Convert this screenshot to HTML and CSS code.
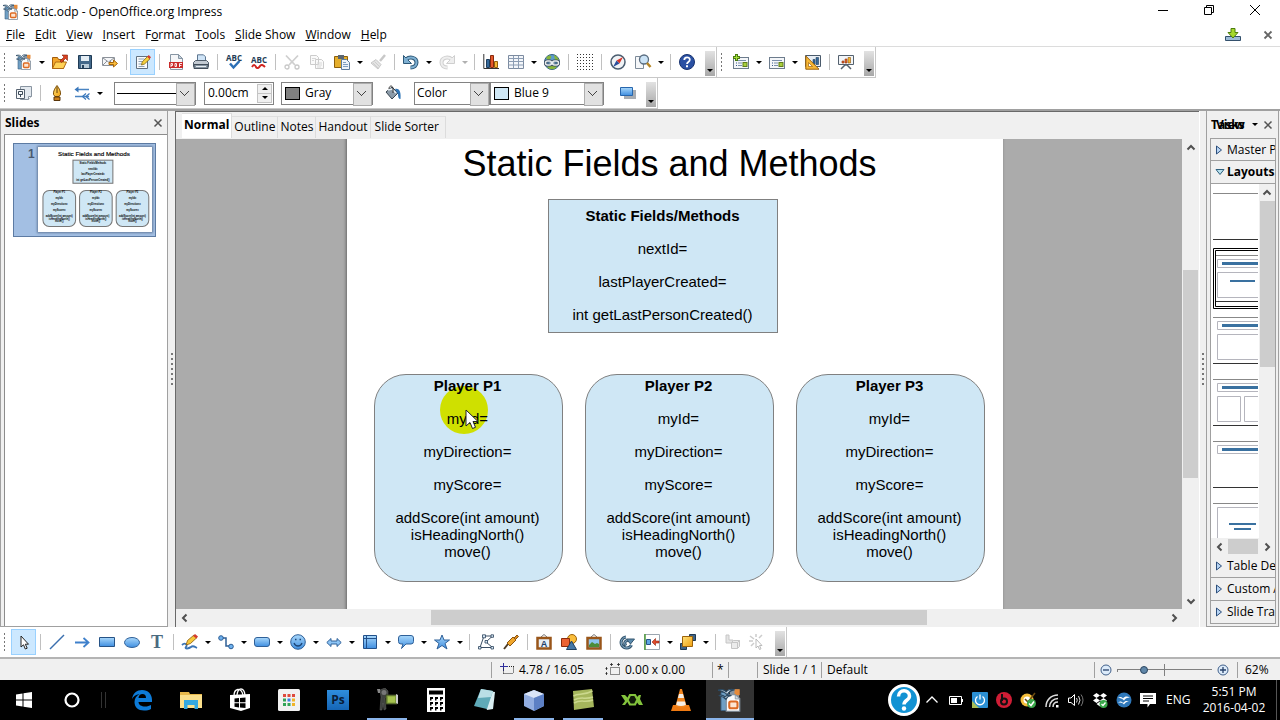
FILE: index.html
```html
<!DOCTYPE html>
<html lang="en">
<head>
  <meta charset="UTF-8">
  <meta name="viewport" content="width=device-width, initial-scale=1.0">
  <title>Static.odp - OpenOffice.org Impress</title>
  <link rel="stylesheet" href="styles.css">
</head>
<body>
  <!-- shared gradients and symbols -->
  <svg class="defs" aria-hidden="true">
    <defs>
      <linearGradient id="blue" x1="0" y1="0" x2="0" y2="1"><stop offset="0" stop-color="#a9d8fb"/><stop offset="1" stop-color="#3f8ee0"/></linearGradient>
      <linearGradient id="gold" x1="0" y1="0" x2="1" y2="1"><stop offset="0" stop-color="#ffe27a"/><stop offset="1" stop-color="#f0a010"/></linearGradient>
      <symbol id="impress" viewBox="0 0 16 16">
        <path d="M2 3h5v12H2z" fill="#6f9fc4" stroke="#3c6283" stroke-width=".6"/>
        <path d="M8 1h6v6H8z" fill="#8795a2"/><path d="M11 .8h3.500v4H11z" fill="#e58a3a"/>
        <path d="M5.500 4.500h6l3 2.500v8.500h-9z" fill="#fafbfc" stroke="#7f8c99" stroke-width=".8"/>
        <path d="M11.500 4.500v2.800h3z" fill="#d5dde4" stroke="#7f8c99" stroke-width=".5"/>
        <path d="M0 1.500c3-1 4.500 0 5.500 1C7 .5 8.500.5 11 1.200 8.500 1.500 7 2.500 6.200 4.500 4.500 2.500 2.500 2 0 1.500zM.5 5c2.500-.6 3.500.2 4.200 1C5.800 4.500 7 4.500 9 5c-1.800.2-3 1-3.700 2.500C4 6 2.500 5.500.500 5z" fill="#dfe9f1" stroke="#2b4a64" stroke-width=".8"/>
        <rect x="7.500" y="9" width="5.500" height="4.500" rx="1" fill="#fde5d2" stroke="#dd6a23" stroke-width="1.400"/>
      </symbol>
      <symbol id="pages" viewBox="0 0 16 12">
        <rect x=".5" y=".5" width="15" height="11" fill="#f4f6f9" stroke="#6d7c8d"/>
        <path d="M3 3.500h10M5 6h4M5 8.500h4" stroke="#7b8fab"/><path d="M3 6h1M3 8.500h1" stroke="#36598c"/>
        <rect x="10" y="5.500" width="4" height="4" fill="#a9cf3b" stroke="#5f7d1c"/>
      </symbol>
      <symbol id="chev" viewBox="0 0 10 10"><path d="M1.500 6.500L5 3l3.500 3.500" fill="none" stroke="#505050" stroke-width="2"/></symbol>
      <symbol id="tri" viewBox="0 0 8 10"><path d="M1.500 1v8l5-4z" fill="#b7d4f4" stroke="#2d4f7c"/></symbol>
    </defs>
  </svg>

  <header class="titlebar">
    <svg class="icon" viewBox="0 0 16 16"><use href="#impress"/></svg>
    <h1>Static.odp - OpenOffice.org Impress</h1>
    <div class="window-buttons">
      <button aria-label="Minimize"><svg class="icon" viewBox="0 0 16 16"><path d="M3 8.500h10" stroke="#000"/></svg></button>
      <button aria-label="Restore"><svg class="icon" viewBox="0 0 16 16"><path d="M3.500 5.500h7v7h-7zM5.500 5.500v-2h7v7h-2" fill="none" stroke="#000"/></svg></button>
      <button aria-label="Close"><svg class="icon" viewBox="0 0 16 16"><path d="M3 3l10 10M13 3L3 13" stroke="#000"/></svg></button>
    </div>
  </header>

  <nav class="menubar">
    <button><u>F</u>ile</button>
    <button><u>E</u>dit</button>
    <button><u>V</u>iew</button>
    <button><u>I</u>nsert</button>
    <button>F<u>o</u>rmat</button>
    <button><u>T</u>ools</button>
    <button><u>S</u>lide Show</button>
    <button><u>W</u>indow</button>
    <button><u>H</u>elp</button>
    <div class="menubar-right">
      <button aria-label="Update available"><svg class="icon" viewBox="0 0 16 16"><path d="M.5 9.500h15v4H.5z" fill="#9dbbd6" stroke="#33506c"/><path d="M6 1.500h4v4h3L8 11 3 5.500h3z" fill="#a6d82c" stroke="#4c7d0d"/></svg></button>
      <button aria-label="Close document"><svg class="icon" viewBox="0 0 16 16"><path d="M4.500 4.500l7 7M11.500 4.500l-7 7" stroke="#666" stroke-width="1.800"/></svg></button>
    </div>
  </nav>

  <div class="toolbars">
    <div class="toolbar">
      <span class="grip"></span>
      <button class="tool" aria-label="New"><svg class="icon" viewBox="0 0 16 16"><use href="#impress"/></svg></button>
      <button class="arrow" aria-label="New options"></button>
      <button class="tool" aria-label="Open"><svg class="icon" viewBox="0 0 16 16"><path d="M.5 14.500v-11h5l1 2h5v9z" fill="#f3a62a" stroke="#a35c0c"/><path d="M.5 14.500l3-6.500h11l-3 6.500z" fill="#ffd257" stroke="#b06a12"/><path d="M8 7l4-4-2-2h5.500v5.500L13.500 4.500l-4 4z" fill="#d8401f" stroke="#84220e" stroke-width=".6"/></svg></button>
      <button class="tool" aria-label="Save"><svg class="icon" viewBox="0 0 16 16"><path d="M1.500 1.500h13v13h-13z" fill="#42688a" stroke="#1f3a54"/><path d="M4 2h8v5H4z" fill="#e4edf4"/><path d="M4 10h8v4H4z" fill="#b8cbd9"/><path d="M5 11h2v3H5z" fill="#24425e"/></svg></button>
      <button class="tool" aria-label="E-mail document"><svg class="icon" viewBox="0 0 16 16"><path d="M.5 3.500h12v8H.5z" fill="#f5f6f8" stroke="#8c929a"/><path d="M1 4l5.500 4L12 4M1 11l4-4M12 11L8 7" fill="none" stroke="#8c929a"/><path d="M7 8.500h4.500v-2.500l4 3.500-4 3.500v-2.500H7z" fill="#f9bd3a" stroke="#a8650b"/></svg></button>
      <span class="sep"></span>
      <button class="tool active" aria-label="Edit file"><svg class="icon" viewBox="0 0 16 16"><path d="M1.500 2.500h11v12h-11z" fill="#fafbfc" stroke="#61707f"/><path d="M3.500 5h6M3.500 7.500h4M3.500 10h3M3.500 12.500h6" stroke="#8ca1b4"/><path d="M6.500 11l.7-3L12.500 2.500l2.500 2.300L9.500 10z" fill="#f7d23e" stroke="#7f6310" stroke-width=".8"/><path d="M12.200 2.800l1.500-1.800L16 3.200l-1.500 1.800z" fill="#d43b2f"/></svg></button>
      <span class="sep"></span>
      <button class="tool" aria-label="Export as PDF"><svg class="icon" viewBox="0 0 16 16"><path d="M2.500.5h8l4 4v11h-12z" fill="#f5f6f8" stroke="#8795a3"/><path d="M10.500.5v4h4z" fill="#c6d4df" stroke="#8795a3"/><path d="M1 8h14v6H1z" fill="#c92a2a"/><path d="M3 13V9.500h1.500v2H3M7 9.500v3h1.500v-3zM11.500 13V9.500H14M11.500 11.500h2" fill="none" stroke="#fff" stroke-width=".9"/></svg></button>
      <button class="tool" aria-label="Print"><svg class="icon" viewBox="0 0 16 16"><path d="M4.500 8V.8h6l2 2V8" fill="#cfe4f7" stroke="#5d7690"/><path d="M.5 8.500l2-2h11l2 2v4H.5z" fill="#c3cad2" stroke="#515d6a"/><path d="M1 10.500h14v4H1z" fill="#8896a3" stroke="#414c58"/><path d="M3 12.500h10" stroke="#e9eef2"/></svg></button>
      <span class="sep"></span>
      <button class="tool" aria-label="Spellcheck"><svg class="icon wide" viewBox="0 0 18 16"><text x="9" y="7" class="abc">ABC</text><path d="M5 9.500l3.500 4 6-6.500" fill="none" stroke="#2c6fb6" stroke-width="2.500"/></svg></button>
      <button class="tool" aria-label="AutoSpellcheck"><svg class="icon wide" viewBox="0 0 18 16"><text x="9" y="9" class="abc">ABC</text><path d="M2 13c2-3 3-2 4 0s3 1 4-1 3-1 5 1" fill="none" stroke="#d0241f" stroke-width="2"/></svg></button>
      <span class="sep"></span>
      <button class="tool" disabled aria-label="Cut"><svg class="icon" viewBox="0 0 16 16"><path d="M2 1.500l9 9.500M14 1.500L5 11" stroke="#cfcfcf" stroke-width="1.800"/><circle cx="3" cy="13" r="2" fill="none" stroke="#c8c8c8" stroke-width="1.300"/><circle cx="13" cy="13" r="2" fill="none" stroke="#c8c8c8" stroke-width="1.300"/></svg></button>
      <button class="tool" disabled aria-label="Copy"><svg class="icon" viewBox="0 0 16 16"><path d="M1.500 1.500h6l2 2v7h-8zM6.500 5.500h6l2 2v7h-8z" fill="#fafafa" stroke="#cccccc"/><path d="M3 4.500h4M3 6.500h2M8 9h5M8 11h5M8 13h4" stroke="#d8d8d8"/></svg></button>
      <button class="tool" aria-label="Paste"><svg class="icon" viewBox="0 0 16 16"><path d="M.5 2.500h13v11H.5z" fill="#e5ae2c" stroke="#8c5f0c"/><path d="M4 1h6v4H4z" fill="#5a6570"/><path d="M7.500 5.500h5l3 3v7h-8z" fill="#edf4fb" stroke="#5c7d9e"/><path d="M9 8.500h3M9 10.500h5M9 12.500h5" stroke="#7f9fc0"/></svg></button>
      <button class="arrow" aria-label="Paste options"></button>
      <button class="tool" disabled aria-label="Format paintbrush"><svg class="icon" viewBox="0 0 16 16"><path d="M15 1l-5 6" stroke="#c8c8c8" stroke-width="2.500"/><path d="M6 5.500l5 5-3 4.500-7-6z" fill="#e4e4e4" stroke="#c8c8c8"/><path d="M3 9l5 5M4.500 7.500l5 5" stroke="#cecece"/></svg></button>
      <span class="sep"></span>
      <button class="tool" aria-label="Undo"><svg class="icon" viewBox="0 0 16 16"><path d="M3 5.500c4-3.500 10.500-2 10.500 3 0 3-2.500 5-6 5" fill="none" stroke="#2d5878" stroke-width="4"/><path d="M.5 1.500v8h8z" fill="#7fb0d2" stroke="#2d5878"/><path d="M3 5.500c4-3.500 10.500-2 10.500 3 0 3-2.500 5-6 5" fill="none" stroke="#7fb0d2" stroke-width="2"/></svg></button>
      <button class="arrow" aria-label="Undo history"></button>
      <button class="tool" disabled aria-label="Redo"><svg class="icon" viewBox="0 0 16 16"><path d="M13 5.500c-4-3.500-10.500-2-10.500 3 0 3 2.500 5 6 5" fill="none" stroke="#cfcfcf" stroke-width="4"/><path d="M15.500 1.500v8h-8z" fill="#eee" stroke="#cfcfcf"/><path d="M13 5.500c-4-3.500-10.500-2-10.500 3 0 3 2.500 5 6 5" fill="none" stroke="#eee" stroke-width="2"/></svg></button>
      <button class="arrow" disabled aria-label="Redo history"></button>
      <span class="sep"></span>
      <button class="tool" aria-label="Chart"><svg class="icon" viewBox="0 0 16 16"><path d="M.8 0v14.500H16" fill="none" stroke="#333"/><path d="M3.500 5.500h3v8h-3z" fill="#35699b" stroke="#1e3d5c"/><path d="M7.500 1.500h3v12h-3z" fill="#e4572a" stroke="#872a0e"/><path d="M11.500 7.500h3v6h-3z" fill="#f6b834" stroke="#93600c"/></svg></button>
      <button class="tool" aria-label="Table"><svg class="icon" viewBox="0 0 16 16"><path d="M.5 1.500h15v13H.5z" fill="#f3f6fa" stroke="#7c8ba0"/><path d="M.5 4.500h15M.5 7.500h15M.5 11h15M5.500 2v12.500M10.500 2v12.500" stroke="#8b9cb3"/></svg></button>
      <button class="arrow" aria-label="Table options"></button>
      <button class="tool" aria-label="Hyperlink"><svg class="icon" viewBox="0 0 16 16"><circle cx="8" cy="8" r="7.500" fill="#5b9bcb" stroke="#335f85"/><path d="M2 4c2-3 4-3 5-2s-1 4-3 4zM10 1c3 1 5 4 5 6l-4-1zM3 13c3-2 8-2 10 0-3 3-7 3-10 0z" fill="#88b63a"/><rect x="1.500" y="7" width="6" height="4" rx="2" fill="none" stroke="#39485a" stroke-width="3"/><rect x="8.500" y="7" width="6" height="4" rx="2" fill="none" stroke="#39485a" stroke-width="3"/><rect x="1.500" y="7" width="6" height="4" rx="2" fill="none" stroke="#e8eef2" stroke-width="1.500"/><rect x="8.500" y="7" width="6" height="4" rx="2" fill="none" stroke="#e8eef2" stroke-width="1.500"/><path d="M5.500 9h5" stroke="#e8eef2"/></svg></button>
      <span class="sep"></span>
      <button class="tool" aria-label="Display grid"><svg class="icon wide" viewBox="0 0 18 16"><path d="M1 .5h17M1 3.500h17M1 6.500h17M1 9.500h17M1 12.500h17M1 15.500h17" stroke="#333" stroke-dasharray="1 2"/></svg></button>
      <span class="sep"></span>
      <button class="tool" aria-label="Navigator"><svg class="icon" viewBox="0 0 16 16"><circle cx="8" cy="8" r="7" fill="#f0f3f6" stroke="#4a5d70" stroke-width="1.500"/><path d="M13 3L6.500 6.500l3 3z" fill="#d8362a"/><path d="M3 13l3.500-6.500 3 3z" fill="#2b4f9b"/></svg></button>
      <button class="tool" aria-label="Zoom"><svg class="icon" viewBox="0 0 16 16"><path d="M.5 2.500h8v12h-8z" fill="#f5f7f9" stroke="#7d8b99"/><circle cx="9" cy="5.500" r="4.500" fill="#cbe3f6" stroke="#5a6d80" stroke-width="1.300"/><path d="M12 9l3.500 4" stroke="#b58423" stroke-width="2.500"/></svg></button>
      <button class="arrow" aria-label="Zoom options"></button>
      <span class="sep"></span>
      <button class="tool" aria-label="Help"><svg class="icon" viewBox="0 0 16 16"><circle cx="8" cy="8" r="7.500" fill="#2a50a3" stroke="#17326f"/><path d="M5.300 6c0-3.500 5.500-3.500 5.500-.3C10.800 8 8 7.800 8 10" fill="none" stroke="#fff" stroke-width="1.800"/><path d="M7 11.300h2v2H7z" fill="#fff"/></svg></button>
      <button class="overflow" aria-label="More standard tools"></button>
    </div>
    <div class="toolbar">
      <span class="grip"></span>
      <button class="tool" aria-label="New slide"><svg class="icon" viewBox="0 0 16 16"><use href="#pages" y="3" width="16" height="12"/><path d="M3.500 0v7M0 3.500h7" stroke="#4b7d10" stroke-width="3"/><path d="M3.500 1v5M1 3.500h5" stroke="#a4df38"/></svg></button>
      <button class="arrow" aria-label="New slide options"></button>
      <button class="tool" aria-label="Slide layout"><svg class="icon" viewBox="0 0 16 16"><use href="#pages" y="3" width="16" height="12"/></svg></button>
      <button class="arrow" aria-label="Slide layout options"></button>
      <button class="tool" aria-label="Slide design"><svg class="icon" viewBox="0 0 16 16"><path d="M.5 1.500h15v11H.5z" fill="#e7edf3" stroke="#4a5a6b"/><path d="M8 5.500h2v5H8zM11 3.500h2.500v7H11z" fill="#35699b" stroke="#1e3d5c" stroke-width=".6"/><path d="M.8 2v13.200H14z" fill="#f8b836" stroke="#9c620a"/><path d="M3.500 8.500v4h4z" fill="#fff" stroke="#9c620a" stroke-width=".7"/></svg></button>
      <span class="sep"></span>
      <button class="tool" aria-label="Slide show"><svg class="icon" viewBox="0 0 16 16"><path d="M.5 1.500h15v9H.5z" fill="#f2f5f8" stroke="#54616e"/><path d="M3 15l4-4h2l4 4" fill="none" stroke="#54616e" stroke-width="1.500"/><path d="M4 7h2v2H4zM7 5h2v4H7z" fill="#e66a2b" stroke="#8a3110" stroke-width=".6"/><path d="M10 3.500h2.500V9H10z" fill="#f7b32f" stroke="#8a5510" stroke-width=".6"/></svg></button>
      <button class="overflow" aria-label="More presentation tools"></button>
    </div>
  </div>

  <div class="toolbars">
    <div class="toolbar">
      <span class="grip"></span>
      <button class="tool" aria-label="Styles and formatting"><svg class="icon" viewBox="0 0 16 16"><path d="M4.500 1.500h11v10l-3 3h-8z" fill="#e3e9ef" stroke="#8994a0"/><path d="M15.500 11.500h-3v3" fill="#fff" stroke="#8994a0"/><path d="M.5 4.500h8v9h-8z" fill="#f6f8fa" stroke="#566270"/><path d="M2.500 6.500h4v3h-4zM4.500 9.500V12" fill="none" stroke="#3c4a58"/></svg></button>
      <span class="sep"></span>
      <button class="tool" aria-label="Line"><svg class="icon" viewBox="0 0 16 16"><path d="M8 .5c2 2.500 4 6 3.500 9l-1.500 2H6l-1.500-2c-.5-3 1.500-6.500 3.500-9z" fill="url(#gold)" stroke="#7b4d08"/><path d="M8 2v6" stroke="#5e3b08"/><path d="M5 12h6v3.500H5z" fill="#cc7f1a" stroke="#593508"/></svg></button>
      <button class="tool" aria-label="Arrow style"><svg class="icon" viewBox="0 0 16 16"><path d="M3 4.500h12M1 11.500h14" stroke="#4a84c2" stroke-width="1.500"/><path d="M4.500 1.500L.5 4.500l4 3z" fill="#3977bb"/><path d="M12 8.500l-3.500 3 3.500 3M15.500 8.500l-3.500 3 3.500 3" fill="none" stroke="#3977bb" stroke-width="1.200"/></svg></button>
      <button class="arrow" aria-label="Arrow style options"></button>
      <div class="combo combo-line">
        <select aria-label="Line style"><option></option></select>
        <span class="line-sample"></span>
      </div>
      <div class="spin">
        <input type="text" value="0.00cm" aria-label="Line width">
        <div class="spin-buttons">
          <button aria-label="Increase"></button>
          <button aria-label="Decrease"></button>
        </div>
      </div>
      <div class="combo combo-color">
        <span class="swatch gray"></span>
        <select aria-label="Line color"><option>Gray</option></select>
      </div>
      <button class="tool" aria-label="Area"><svg class="icon" viewBox="0 0 16 16"><path d="M1 7l6-5 6 6-6 6z" fill="#8b9aa8" stroke="#36434f"/><path d="M3 5l4-1 4 4" stroke="#eaf0f5" stroke-width="1.500" fill="none"/><path d="M4 4c0-4 4-4 4 0v4" fill="none" stroke="#333"/><path d="M10 4c5-1 6 4 5.500 10-2 0-2.500-2-2.500-5z" fill="#2f74b5"/></svg></button>
      <div class="combo combo-fill">
        <select aria-label="Fill type"><option>Color</option></select>
      </div>
      <div class="combo combo-color combo-blue">
        <span class="swatch blue"></span>
        <select aria-label="Fill color"><option>Blue 9</option></select>
      </div>
      <button class="tool" aria-label="Shadow"><svg class="icon" viewBox="0 0 16 16"><path d="M4 5h12v9H4z" fill="#a9adb2"/><path d="M.5 2.500h12v8H.5z" fill="url(#blue)" stroke="#2766ad"/></svg></button>
      <button class="overflow" aria-label="More line and filling tools"></button>
    </div>
  </div>

  <div class="workspace">
    <aside class="slides-panel">
      <div class="panel-head">
        <h2>Slides</h2>
        <button aria-label="Close slides"><svg class="icon" viewBox="0 0 16 16"><path d="M4.500 4.500l7 7M11.500 4.500l-7 7" stroke="#555" stroke-width="1.500"/></svg></button>
      </div>
      <div class="slides-list">
        <div class="slide-item">
          <span class="slide-number">1</span>
          <svg class="thumb" viewBox="0 0 656 490">
            <text x="322" y="50" font-size="36" stroke="#000">Static Fields and Methods</text>
            <g fill="#cfe7f5" stroke="#777" stroke-width="6">
              <rect x="201" y="76" width="230" height="133"/>
              <rect x="28" y="251" width="188" height="207" rx="36"/>
              <rect x="239" y="251" width="188" height="207" rx="36"/>
              <rect x="450" y="251" width="188" height="207" rx="36"/>
            </g>
            <g font-size="15" font-weight="bold">
              <text x="316" y="98">Static Fields/Methods</text><text x="316" y="131">nextId=</text><text x="316" y="164">lastPlayerCreated=</text><text x="316" y="198">int getLastPersonCreated()</text>
              <text x="122" y="268">Player P1</text><text x="122" y="301">myId=</text><text x="122" y="335">myDirection=</text><text x="122" y="368">myScore=</text><text x="122" y="401">addScore(int amount)</text><text x="122" y="418">isHeadingNorth()</text><text x="122" y="435">move()</text>
              <text x="333" y="268">Player P2</text><text x="333" y="301">myId=</text><text x="333" y="335">myDirection=</text><text x="333" y="368">myScore=</text><text x="333" y="401">addScore(int amount)</text><text x="333" y="418">isHeadingNorth()</text><text x="333" y="435">move()</text>
              <text x="544" y="268">Player P3</text><text x="544" y="301">myId=</text><text x="544" y="335">myDirection=</text><text x="544" y="368">myScore=</text><text x="544" y="401">addScore(int amount)</text><text x="544" y="418">isHeadingNorth()</text><text x="544" y="435">move()</text>
            </g>
          </svg>
        </div>
      </div>
    </aside>

    <div class="splitter"><span></span></div>

    <main class="editor">
      <div class="tabs">
        <button class="tab current">Normal</button>
        <button class="tab">Outline</button>
        <button class="tab">Notes</button>
        <button class="tab">Handout</button>
        <button class="tab">Slide Sorter</button>
      </div>
      <div class="view">
        <div class="canvas">
          <div class="slide">
            <h2>Static Fields and Methods</h2>
            <div class="shape static-box">
              <p><b>Static Fields/Methods</b></p>
              <p>nextId=</p>
              <p>lastPlayerCreated=</p>
              <p>int getLastPersonCreated()</p>
            </div>
            <div class="shape player p1">
              <span class="highlight"></span>
              <p><b>Player P1</b></p>
              <p>myId=</p>
              <p>myDirection=</p>
              <p>myScore=</p>
              <p>addScore(int amount)<br>isHeadingNorth()<br>move()</p>
              <svg class="cursor" viewBox="0 0 14 21"><path d="M1 1v16l4-3.500 2.500 6 3-1.200L8 12.500h5z" fill="#fff" stroke="#222"/></svg>
            </div>
            <div class="shape player p2">
              <p><b>Player P2</b></p>
              <p>myId=</p>
              <p>myDirection=</p>
              <p>myScore=</p>
              <p>addScore(int amount)<br>isHeadingNorth()<br>move()</p>
            </div>
            <div class="shape player p3">
              <p><b>Player P3</b></p>
              <p>myId=</p>
              <p>myDirection=</p>
              <p>myScore=</p>
              <p>addScore(int amount)<br>isHeadingNorth()<br>move()</p>
            </div>
          </div>
        </div>
        <div class="scroll vertical">
          <button aria-label="Scroll up"><svg viewBox="0 0 10 10"><use href="#chev"/></svg></button>
          <span class="before"></span><span class="thumb-bar"></span><span class="after"></span>
          <button class="down" aria-label="Scroll down"><svg viewBox="0 0 10 10"><use href="#chev"/></svg></button>
        </div>
        <div class="scroll horizontal">
          <button class="left" aria-label="Scroll left"><svg viewBox="0 0 10 10"><use href="#chev"/></svg></button>
          <span class="before"></span><span class="thumb-bar"></span><span class="after"></span>
          <button class="right" aria-label="Scroll right"><svg viewBox="0 0 10 10"><use href="#chev"/></svg></button>
        </div>
      </div>
    </main>

    <div class="splitter right-splitter"><span></span></div>

    <aside class="tasks-panel">
      <div class="panel-head">
        <h2>Tasks<span class="view-label">View</span></h2>
        <button class="arrow" aria-label="View menu"></button>
        <button aria-label="Close tasks"><svg class="icon" viewBox="0 0 16 16"><path d="M4.500 4.500l7 7M11.500 4.500l-7 7" stroke="#555" stroke-width="1.500"/></svg></button>
      </div>
      <div class="sections">
        <button class="section"><svg viewBox="0 0 8 10"><use href="#tri"/></svg>Master Pages</button>
        <button class="section open"><svg viewBox="0 0 10 8"><path d="M1 1.500h8l-4 5z" fill="#b7e0ee" stroke="#2d5f7c"/></svg>Layouts</button>
        <div class="layouts">
          <div class="layout-list">
            <svg class="layout" viewBox="0 0 45 62"><path d="M0 7.500h45" stroke="#888"/><path d="M0 53.500h45" stroke="#333"/></svg>
            <svg class="layout" viewBox="0 0 45 62"><path d="M45 .5H.5v60H45M45 2.500H2.500v56H45" fill="none" stroke="#000"/><path d="M3 7.500h42" stroke="#888"/><path d="M3 53.500h42" stroke="#333"/><path d="M45 11.500H4.500v8H45M45 24.500H4.500v25H45" fill="none" stroke="#b5b5bd"/><path d="M9 15.500h36" stroke="#3a71a0" stroke-width="3"/><path d="M17 33h25" stroke="#3a71a0" stroke-width="2"/></svg>
            <svg class="layout" viewBox="0 0 45 62"><path d="M0 7.500h45" stroke="#888"/><path d="M0 53.500h45" stroke="#333"/><path d="M45 11.500H4.500v8H45M45 24.500H4.500v25H45" fill="none" stroke="#b5b5bd"/><path d="M9 15.500h36" stroke="#3a71a0" stroke-width="3"/></svg>
            <svg class="layout" viewBox="0 0 45 62"><path d="M0 7.500h45" stroke="#888"/><path d="M0 53.500h45" stroke="#333"/><path d="M45 11.500H4.500v8H45M4.500 24.500h23v25h-23zM45 24.500H31.500v25H45" fill="none" stroke="#b5b5bd"/><path d="M9 15.500h36" stroke="#3a71a0" stroke-width="3"/></svg>
            <svg class="layout" viewBox="0 0 45 62"><path d="M0 7.500h45" stroke="#888"/><path d="M0 53.500h45" stroke="#333"/><path d="M45 11.500H4.500v8H45" fill="none" stroke="#b5b5bd"/><path d="M9 15.500h36" stroke="#3a71a0" stroke-width="3"/></svg>
            <svg class="layout" viewBox="0 0 45 62"><path d="M0 7.500h45" stroke="#888"/><path d="M45 11.500H4.500v45H45" fill="none" stroke="#b5b5bd"/><path d="M16 28h27M21 33h17" stroke="#3a71a0" stroke-width="2"/></svg>
          </div>
          <div class="scroll vertical">
            <button aria-label="Scroll layouts up"><svg viewBox="0 0 10 10"><use href="#chev"/></svg></button>
            <span class="thumb-bar"></span><span class="after"></span>
          </div>
          <div class="scroll horizontal">
            <button class="left" aria-label="Scroll layouts left"><svg viewBox="0 0 10 10"><use href="#chev"/></svg></button>
            <span class="thumb-bar"></span>
            <button class="right" aria-label="Scroll layouts right"><svg viewBox="0 0 10 10"><use href="#chev"/></svg></button>
          </div>
        </div>
        <button class="section"><svg viewBox="0 0 8 10"><use href="#tri"/></svg>Table Design</button>
        <button class="section"><svg viewBox="0 0 8 10"><use href="#tri"/></svg>Custom Animation</button>
        <button class="section"><svg viewBox="0 0 8 10"><use href="#tri"/></svg>Slide Transition</button>
      </div>
    </aside>
  </div>

  <div class="toolbars drawing">
    <div class="toolbar">
      <span class="grip"></span>
      <button class="tool active" aria-label="Select"><svg class="icon" viewBox="0 0 16 16"><path d="M5 2v11l2.500-2.200L9.300 15l1.900-.8-1.900-4H12.500z" fill="#fff" stroke="#222"/></svg></button>
      <span class="sep"></span>
      <button class="tool" aria-label="Line tool"><svg class="icon" viewBox="0 0 16 16"><path d="M1 15L15 1" stroke="#3a6fae" stroke-width="1.500"/></svg></button>
      <button class="tool" aria-label="Arrow tool"><svg class="icon" viewBox="0 0 16 16"><path d="M1 8.500h13M9.500 4l5 4.500-5 4.500" fill="none" stroke="#3f80cb" stroke-width="1.800"/></svg></button>
      <button class="tool" aria-label="Rectangle"><svg class="icon" viewBox="0 0 16 16"><path d="M.5 3.500h15v9H.5z" fill="url(#blue)" stroke="#265386"/></svg></button>
      <button class="tool" aria-label="Ellipse"><svg class="icon" viewBox="0 0 16 16"><ellipse cx="8" cy="8.500" rx="7.500" ry="5" fill="url(#blue)" stroke="#2f6098"/></svg></button>
      <button class="tool" aria-label="Text"><svg class="icon" viewBox="0 0 16 16"><text x="8" y="14" class="text-tool">T</text></svg></button>
      <span class="sep"></span>
      <button class="tool" aria-label="Curve"><svg class="icon" viewBox="0 0 16 16"><path d="M0 11c3-3 6 0 4 2s3 2 5 0 4 0 6 1" fill="none" stroke="#3a74b5" stroke-width="1.800"/><path d="M4 11l1.500-4.500L12 1l3 2.500-6.500 6z" fill="#f7c83a" stroke="#86590e" stroke-width=".8"/><path d="M11 2l2-2 3 2.500-1.500 2z" fill="#d43c31"/></svg></button>
      <button class="arrow" aria-label="Curve options"></button>
      <button class="tool" aria-label="Connector"><svg class="icon" viewBox="0 0 16 16"><path d="M3 4h5v8h5" fill="none" stroke="#2f5f95" stroke-width="1.500"/><circle cx="3" cy="4" r="2.300" fill="#6eb1ee" stroke="#2b5c94"/><circle cx="13" cy="12.500" r="2.300" fill="#6eb1ee" stroke="#2b5c94"/></svg></button>
      <button class="arrow" aria-label="Connector options"></button>
      <button class="tool" aria-label="Basic shapes"><svg class="icon" viewBox="0 0 16 16"><rect x=".5" y="3.500" width="15" height="9" rx="2.500" fill="url(#blue)" stroke="#2f6098"/></svg></button>
      <button class="arrow" aria-label="Basic shapes options"></button>
      <button class="tool" aria-label="Symbol shapes"><svg class="icon" viewBox="0 0 16 16"><circle cx="8" cy="8" r="7.300" fill="url(#blue)" stroke="#2f6098"/><path d="M4 9c1.500 4 6.500 4 8 0M5 5.500h1.500M9.500 5.500H11" fill="none" stroke="#1f4675" stroke-width="1.300"/></svg></button>
      <button class="arrow" aria-label="Symbol shapes options"></button>
      <button class="tool" aria-label="Block arrows"><svg class="icon" viewBox="0 0 16 16"><path d="M.8 8.500L5 4.500V7h6V4.500l4.200 4-4.200 4V10H5v2.500z" fill="#8cc4f5" stroke="#2f6098"/></svg></button>
      <button class="arrow" aria-label="Block arrows options"></button>
      <button class="tool" aria-label="Flowcharts"><svg class="icon" viewBox="0 0 16 16"><path d="M1.500 1.500h13v13h-13z" fill="url(#blue)" stroke="#22508a"/><path d="M4.500 1.500v13M1.500 4.500h13" stroke="#22508a"/></svg></button>
      <button class="arrow" aria-label="Flowcharts options"></button>
      <button class="tool" aria-label="Callouts"><svg class="icon" viewBox="0 0 16 16"><path d="M3 1.500h10q2.500 0 2.500 2.500v3.500q0 2.500-2.500 2.500H8L3.500 14.500 5 10H3Q.5 10 .5 7.500V4Q.5 1.500 3 1.500z" fill="url(#blue)" stroke="#2f6098"/></svg></button>
      <button class="arrow" aria-label="Callouts options"></button>
      <button class="tool" aria-label="Stars"><svg class="icon" viewBox="0 0 16 16"><path d="M8 1l2 5h5.500L11 9.500l2 5.500-5-3.500L3 15l2-5.500L.5 6H6z" fill="url(#blue)" stroke="#2f6098"/></svg></button>
      <button class="arrow" aria-label="Stars options"></button>
      <span class="sep"></span>
      <button class="tool" aria-label="Points"><svg class="icon" viewBox="0 0 16 16"><path d="M14.500 2H6L2 13.500h12.500L8 8l6.500-6" fill="none" stroke="#3c4f64"/><path d="M4.500.8h3v3h-3zM13 .8h2.500v2.500H13zM7 6.500h2.500V9H7zM.5 12.500H3V15H.5zM13 12.500h2.500V15H13z" fill="#dceaf7" stroke="#29415a" stroke-width=".8"/></svg></button>
      <button class="tool" aria-label="Glue points"><svg class="icon" viewBox="0 0 16 16"><path d="M1 15l4-5" stroke="#4d3b24" stroke-width="2"/><path d="M4 9l6-6 3 3-6 6z" fill="#f1a72c" stroke="#8c5510"/><path d="M11 4l3-3 1.500 1.500-3 3z" fill="#da8a20" stroke="#8c5510"/></svg></button>
      <span class="sep"></span>
      <button class="tool" aria-label="Fontwork gallery"><svg class="icon" viewBox="0 0 16 16"><path d="M5 3l3-2.500L11 3" fill="none" stroke="#777"/><path d="M1.500 4h13v10.500h-13z" fill="#e6eef6" stroke="#99561a" stroke-width="2.500"/><text x="8" y="13" class="letter-a">A</text></svg></button>
      <button class="tool" aria-label="From file"><svg class="icon" viewBox="0 0 16 16"><circle cx="11" cy="5" r="4.500" fill="#f9bd3b" stroke="#9c620a"/><path d="M.5 4.500h8v8h-8z" fill="#ec6333" stroke="#8a2c0c"/><path d="M10.500 7l5 8.500h-10z" fill="#4478a8" stroke="#20405f"/></svg></button>
      <button class="tool" aria-label="Gallery"><svg class="icon" viewBox="0 0 16 16"><path d="M5 3l3-2.500L11 3" fill="none" stroke="#777"/><path d="M1.500 4h13v10.500h-13z" fill="#8dc4ee" stroke="#99561a" stroke-width="2.500"/><path d="M3 11l3-3 3 2 2-1 2 1v3H3z" fill="#4c8c39"/></svg></button>
      <span class="sep"></span>
      <button class="tool" aria-label="Rotate"><svg class="icon" viewBox="0 0 16 16"><path d="M12.500 11A5.500 5.500 0 1 1 7 3M7 11.500c-3-3 0-6 3-4.500" fill="none" stroke="#35566f" stroke-width="3"/><path d="M12.500 11A5.500 5.500 0 1 1 7 3M7 11.500c-3-3 0-6 3-4.500" fill="none" stroke="#8cb5d2"/><path d="M7.500 5h8l-4 5z" fill="#5a8aad" stroke="#35566f"/></svg></button>
      <button class="tool" aria-label="Alignment"><svg class="icon" viewBox="0 0 16 16"><path d="M.5.5h15v15H.5z" fill="#fff" stroke="#9ba5af"/><path d="M1 0v16" stroke="#4f9d3a" stroke-width="1.500"/><path d="M2.500 5.500h4v5h-4z" fill="#5fa4e4" stroke="#265386"/><path d="M8 8l3.500-3.500V7H15v2h-3.500v2.500z" fill="#e04b2c" stroke="#8d2410" stroke-width=".6"/></svg></button>
      <button class="arrow" aria-label="Alignment options"></button>
      <button class="tool" aria-label="Arrange"><svg class="icon" viewBox="0 0 16 16"><path d="M9.500.5h6v6h-6zM.5 9.500h6v6h-6z" fill="#3f6385" stroke="#1f3a54"/><path d="M2.500 2.500h10v10h-10z" fill="url(#gold)" stroke="#9c620a"/></svg></button>
      <button class="arrow" aria-label="Arrange options"></button>
      <span class="sep"></span>
      <button class="tool" disabled aria-label="Extrusion"><svg class="icon" viewBox="0 0 16 16"><path d="M2 1h3v5h4v3H2z" fill="#e4e4e4" stroke="#c6c6c6"/><path d="M7.500 8.500l2-2h6v6l-2 2h-6zM7.500 8.500h6v6M13.500 8.500l2-2" fill="#ececec" stroke="#c6c6c6"/></svg></button>
      <button class="tool" disabled aria-label="Interaction"><svg class="icon" viewBox="0 0 16 16"><path d="M7 0v3M1 2l4 3M0 7h4M2 12l3-3M13 1l-3 3" stroke="#ccc" stroke-width="1.500"/><path d="M7 5v9l2-2 1.500 3.500 1.500-.7-1.500-3.300H13z" fill="#fff" stroke="#bbb"/></svg></button>
      <button class="overflow" aria-label="More drawing tools"></button>
    </div>
  </div>

  <div class="statusbar">
    <span class="cell position"><svg class="icon" viewBox="0 0 16 16"><path d="M4.500 1v8M1 4.500h8" stroke="#2e2e9c"/><path d="M4.500 11.500h10M4.500 6.500v5M14.500 5.500v6M10 4.500h5" stroke="#222" stroke-dasharray="1 1" fill="none"/></svg>4.78 / 16.05</span>
    <span class="cell size"><svg class="icon" viewBox="0 0 16 16"><path d="M5.500 5.500h9v7h-9z" fill="none" stroke="#222" stroke-dasharray="1 1"/><path d="M5 2.500h3M6.500 1v3M12 2.500h3M13.500 1v3M1.500 5v3M.5 6.500h2M1.500 10v3M.5 11.500h2" stroke="#222" stroke-width=".8"/></svg>0.00 x 0.00</span>
    <span class="cell modified">*</span>
    <span class="cell signature"></span>
    <span class="cell slide-no">Slide 1 / 1</span>
    <span class="cell template">Default</span>
    <span class="cell zoom">
      <button aria-label="Zoom out"><svg viewBox="0 0 12 12"><circle cx="6" cy="6" r="5" fill="#dcebfa" stroke="#41608a"/><path d="M3 6h6" stroke="#26406a" stroke-width="1.300"/></svg></button>
      <input type="range" min="0" max="100" value="26" aria-label="Zoom">
      <button aria-label="Zoom in"><svg viewBox="0 0 12 12"><circle cx="6" cy="6" r="5" fill="#dcebfa" stroke="#41608a"/><path d="M3 6h6M6 3v6" stroke="#26406a" stroke-width="1.300"/></svg></button>
    </span>
    <span class="cell percent">62%</span>
  </div>

  <footer class="taskbar">
    <button class="task" aria-label="Start"><svg viewBox="0 0 24 24"><path d="M4 6.500L10.500 5.500v6H4zM11.500 5.300L20 4v7.500h-8.500zM4 12.500h6.500v6L4 17.500zM11.500 12.500H20V20l-8.500-1.300z" fill="#fff"/></svg></button>
    <button class="task" aria-label="Cortana"><svg viewBox="0 0 24 24"><circle cx="12" cy="12" r="6.500" fill="none" stroke="#fff" stroke-width="2.200"/></svg></button>
    <span class="task-grip"></span>
    <button class="task" aria-label="Edge"><svg viewBox="0 0 24 24"><path d="M2 11C3 5 7 2 12 2c6 0 10 4 10 10v2H8.500c.2 3 3 4.500 6.500 4.500 2.500 0 4.500-.7 6-1.500v4c-2 1-4 1.500-7 1.500-6 0-9.500-3.500-9.500-8.500 0-3.500 2-6.500 5-8C5.500 6.500 3.500 8.500 2 11zm6.500-1H16c0-2.500-1.200-4-3.500-4s-3.700 1.600-4 4z" fill="#0d7bd8"/></svg></button>
    <button class="task" aria-label="File Explorer"><svg viewBox="0 0 24 24"><path d="M1 4h9l1 2h12v14H1z" fill="#e8b94c"/><path d="M1 7h22v13H1z" fill="#fbe08c"/><path d="M5 12h14v9h-3.500v-4h-7v4H5z" fill="#33a8e0"/></svg></button>
    <button class="task" aria-label="Store"><svg viewBox="0 0 24 24"><path d="M2 7l20-1v14l-9 3-11-3z" fill="#fff"/><path d="M6 8c0-8 7-9 9-1M9 7c1-8 7-8 8 0" fill="none" stroke="#fff" stroke-width="1.300"/><path d="M6.500 10.500l4.500-.4v4.200H6.500zM12 10l5.500-.4v4.700H12zM6.500 15.200H11v4.200l-4.500-.6zM12 15.200h5.500V20l-5.500-.5z" fill="#000"/></svg></button>
    <button class="task" aria-label="App launcher"><svg viewBox="0 0 24 24"><rect x="1" y="1" width="22" height="22" rx="1.500" fill="#f1f1f1"/><path d="M6 6h3v3H6zM10.500 6h3v3h-3zM15 6h3v3h-3z" fill="#de4a3d"/><path d="M6 10.500h3v3H6z" fill="#32a457"/><path d="M10.500 10.500h3v3h-3z" fill="#3b7ce5"/><path d="M15 10.500h3v3h-3z" fill="#f0b428"/><path d="M6 15h3v3H6zM10.500 15h3v3h-3z" fill="#32a457"/><path d="M15 15h3v3h-3z" fill="#f0b428"/></svg></button>
    <button class="task" aria-label="Photoshop"><span class="ps">Ps</span></button>
    <button class="task running" aria-label="Camtasia Recorder"><svg viewBox="0 0 24 24"><path d="M5 2l5-2 3 3v5l-3 2 1 11-2 1-1-7-1 7H5l1-13z" fill="#3f423f" stroke="#666" stroke-width=".5"/><circle cx="9" cy="4.500" r="2.500" fill="#777"/><path d="M2 1h3v4H3z" fill="#888"/><path d="M11 7h11v9H11z" fill="#7e9b3b" stroke="#3b4722"/><path d="M13 8.500h7v6h-7z" fill="#a6c34f"/><path d="M21 6l2 1v9l-2-1z" fill="#ccc"/></svg></button>
    <button class="task" aria-label="Calculator"><svg viewBox="0 0 24 24"><path d="M3 0h18v24H3z" fill="#fff"/><path d="M5 2.500h14v4H5zM6 9h3v2H7.500v1.500H6zM11 9h3v2h-1.500v1.500H11zM16 9h3v2h-1.500v1.500H16zM6 14h3v2H7.500v1.500H6zM11 14h3v2h-1.500v1.500H11zM16 14h3v2h-1.500v1.500H16zM6 19h3v2H7.500v1.500H6zM11 19h3v2h-1.500v1.500H11zM16 19h3v2h-1.500v1.500H16z" fill="#000"/></svg></button>
    <button class="task" aria-label="Notepad"><svg viewBox="0 0 24 24"><path d="M8 2l14 2-2 17-6 1z" fill="#d9eef2"/><path d="M8 1l12 2-6 18-13-3z" fill="#5faab8"/><path d="M8 1l12 2-2 6L5 10z" fill="#b9dfe6"/></svg></button>
    <button class="task running" aria-label="NetBeans"><svg viewBox="0 0 24 24"><path d="M12 2l10 4v12l-10 5-10-5V6z" fill="#92ade0"/><path d="M12 2l10 4-10 4L2 6z" fill="#d9e4f8"/><path d="M12 10l10-4v12l-10 5z" fill="#5c7fc4"/></svg></button>
    <button class="task running" aria-label="Camtasia Studio"><svg viewBox="0 0 24 24"><path d="M2 3l19-2 2 18-20 3z" fill="#a5b65c"/><path d="M2.500 8C8 5 12 8 21.500 3M3 12c7-4 11 0 19-3M3 15c7-4 11 0 19-3" fill="none" stroke="#cbd88d" stroke-width="1.500"/></svg></button>
    <button class="task" aria-label="Code tool"><svg viewBox="0 0 24 24"><path d="M1 7h4l3 3v3l-3 4H2l3-4zM23 17h-4l-3-4v-3l3-3h2l-1 4z" fill="#83c33c"/><path d="M10 7h5l2.500 4.500L15 16.500h-5L7.500 12z" fill="#101a08" stroke="#83c33c" stroke-width="2.200"/></svg></button>
    <button class="task" aria-label="VLC"><svg viewBox="0 0 24 24"><path d="M4 17h16l2 6H2z" fill="#ef7a12"/><path d="M11 1h2l4.500 17q-5.500 3-11 0z" fill="#f1851f"/><path d="M10 6h4l1 4H9zM8 13.500h8l.8 3.500q-4.800 2-9.600 0z" fill="#f5efe8"/></svg></button>
    <button class="task running focused" aria-label="OpenOffice Impress"><svg viewBox="0 0 16 16"><use href="#impress"/></svg></button>

    <div class="tray">
      <button class="tray-help" aria-label="Get help"><svg viewBox="0 0 32 32"><circle cx="16" cy="16" r="14.500" fill="#1292d3" stroke="#fff" stroke-width="3"/><path d="M10.500 12.500c0-7.500 11-7.500 11-.5 0 4.500-5.500 4-5.500 8.500" fill="none" stroke="#fff" stroke-width="3.500"/><circle cx="16" cy="24.500" r="2.200" fill="#fff"/></svg></button>
      <button aria-label="Show hidden icons"><svg viewBox="0 0 16 16"><path d="M2.500 10.500L8 5l5.500 5.500" fill="none" stroke="#fff" stroke-width="1.300"/></svg></button>
      <button aria-label="Battery"><svg viewBox="0 0 16 16"><path d="M1.500 4.500h12v8h-12zM14.500 7v3" fill="none" stroke="#fff"/><path d="M3 6h6v5H3z" fill="#fff"/></svg></button>
      <button aria-label="Power"><svg viewBox="0 0 16 16"><rect width="16" height="16" rx="1" fill="#2b8fd2"/><path d="M0 9l7 7H0z" fill="#a9bd57"/><path d="M5.500 4.500a4.500 4.500 0 1 0 5 0M8 2.500v5" fill="none" stroke="#fff" stroke-width="1.300"/></svg></button>
      <button aria-label="Beats audio"><svg viewBox="0 0 16 16"><circle cx="8" cy="8" r="8" fill="#cf1d35"/><path d="M6 2v7" stroke="#111" stroke-width="2"/><circle cx="8" cy="9.500" r="3" fill="none" stroke="#111" stroke-width="2"/></svg></button>
      <button aria-label="Antivirus"><svg viewBox="0 0 16 16"><circle cx="7" cy="8" r="6.500" fill="#f3bd3a"/><circle cx="7" cy="8" r="3.500" fill="#fff"/><path d="M5 7l3 3 7-9" fill="none" stroke="#6b4a10" stroke-width="1.500"/><circle cx="11.500" cy="11.500" r="4.500" fill="#3aa84a"/><path d="M9 11.500l2 2 3-4" fill="none" stroke="#fff" stroke-width="1.500"/></svg></button>
      <button aria-label="Wireless"><svg viewBox="0 0 16 16"><path d="M2 15C2 8 7 3 14 3M5.500 15c0-5 4-8.500 8.500-8.500M9 15c0-3 2-5 5-5" fill="none" stroke="#ddd" stroke-width="1.500"/><path d="M12 13h2.500v2.500H12z" fill="#fff"/></svg></button>
      <button aria-label="Volume"><svg viewBox="0 0 16 16"><path d="M.5 6h2.500l3.500-3.500v11L3 10.500H.5z" fill="none" stroke="#fff"/><path d="M8.500 6q1.500 2 0 4.500M10.500 4q3 4 0 8.500" fill="none" stroke="#ddd"/><path d="M13 2.500q4 5.500 0 11.500" fill="none" stroke="#777"/></svg></button>
      <button aria-label="Dropbox"><svg viewBox="0 0 16 16"><path d="M4.500 1L8 3.500 4.500 6 1 3.500zM11.500 1L15 3.500 11.500 6 8 3.500zM4.500 6L8 8.500 4.500 11 1 8.500zM11.500 6L15 8.500 11.500 11 8 8.500zM8 9.500l3.500 2.500L8 14.500 4.500 12z" fill="#fff"/><circle cx="11.500" cy="12" r="4" fill="#3aa84a"/><path d="M9.500 12l1.500 1.500 2.500-3" fill="none" stroke="#fff" stroke-width="1.300"/></svg></button>
      <button aria-label="OpenOffice quickstarter"><svg viewBox="0 0 16 16"><circle cx="8" cy="8" r="7.500" fill="#2f78ba"/><path d="M2 6c3-2 4-1 5 .5C9 4 11 4 14 5.500c-3 0-5 1-6 3C6.500 6.500 4 6 2 6zM2 10.500c3-2 4-1 5 .5 2-2.500 4-2.500 6-1.500-2 0-4 1-5 3-1.500-2-4-2-6-2z" fill="#fff"/></svg></button>
      <button aria-label="Action center"><svg viewBox="0 0 16 16"><path d="M0 1h16v11h-6l-2.500 3.500V12H0z" fill="#fff"/><path d="M3 4h10M3 6.500h10M3 9h6" stroke="#000"/></svg></button>
      <span class="lang">ENG</span>
      <time class="clock">5:51 PM<br>2016-04-02</time>
      <span class="show-desktop"></span>
    </div>
  </footer>
</body>
</html>
```

FILE: styles.css
```css
* {
  margin: 0;
  padding: 0;
  box-sizing: border-box;
}

body {
  display: flex;
  flex-direction: column;
  height: 100vh;
  overflow: hidden;
  background-color: #fff;
  color: #000;
  font-family: "Open Sans", "Noto Sans", sans-serif;
  font-size: 12px;
  line-height: 16px;
}

button, input, select {
  font: inherit;
  color: inherit;
  background: none;
  border: none;
  border-radius: 0;
  outline: none;
}

svg {
  display: block;
  flex: none;
}

.defs {
  position: absolute;
  width: 0;
  height: 0;
}

.icon {
  width: 16px;
  height: 16px;
  overflow: visible;
}

.icon.wide {
  width: 18px;
}

/* title and menu */
.titlebar {
  display: flex;
  align-items: center;
  height: 23px;
  padding: 0 2px 0 3px;
}

.titlebar h1 {
  flex: 1;
  margin-left: 4px;
  font-size: 12px;
  font-weight: normal;
}

.window-buttons {
  display: flex;
}

.window-buttons button {
  display: flex;
  justify-content: center;
  width: 46px;
  height: 20px;
}

.menubar {
  display: flex;
  align-items: center;
  height: 24px;
  padding-left: 1px;
  border-bottom: 1px solid #dcdcdc;
}

.menubar > button {
  padding: 0 5px;
}

.menubar-right {
  display: flex;
  gap: 19px;
  margin-left: auto;
  padding-right: 4px;
}

/* toolbars */
.toolbars {
  display: flex;
  height: 31px;
}

.toolbar {
  display: flex;
  align-items: center;
  border-right: 1px solid #c8c8c8;
  border-bottom: 1px solid #c8c8c8;
}

.grip {
  width: 11px;
  height: 19px;
  background: repeating-linear-gradient(#777 0 2px, #fff 2px 4px) 4px 0 / 1px 100% no-repeat;
}

.tool {
  display: flex;
  align-items: center;
  justify-content: center;
  width: 25px;
  height: 26px;
}

.tool.active {
  background-color: #cce8ff;
  border: 1px solid #99d1ff;
}

.arrow {
  width: 11px;
  height: 20px;
}

.arrow::before {
  content: "";
  display: block;
  width: 0;
  margin: 0 auto;
  border: 3px solid transparent;
  border-top-color: #000;
  border-bottom: none;
}

.arrow:disabled::before {
  border-top-color: #b0b0b0;
}

.sep {
  width: 8px;
  height: 16px;
  background: linear-gradient(#c0c0c0, #c0c0c0) center / 1px 100% no-repeat;
}

.overflow {
  display: flex;
  align-items: flex-end;
  justify-content: center;
  width: 10px;
  height: 25px;
  margin: 2px 1px 0 6px;
  padding-bottom: 4px;
  background: linear-gradient(#e2e2e2, #a8a8a8);
}

.overflow::before {
  content: "";
  border: 3px solid transparent;
  border-top-color: #000;
  border-bottom: none;
}

.abc {
  font: bold 8px "Open Sans", sans-serif;
  text-anchor: middle;
  fill: #243d57;
}

.text-tool {
  font: bold 18px "Liberation Serif", serif;
  text-anchor: middle;
  fill: #4b6a80;
}

.letter-a {
  font: bold 9px "Liberation Sans", sans-serif;
  text-anchor: middle;
  fill: #223f66;
}

.combo, .spin {
  position: relative;
  display: flex;
  height: 23px;
  border: 1px solid #828282;
  background-color: #fff;
}

.combo select {
  appearance: none;
  width: 100%;
  padding-left: 2px;
}

.combo::after {
  content: "";
  position: absolute;
  top: 0;
  right: 0;
  width: 17px;
  height: 21px;
  border: 1px solid #adadad;
  background:
    linear-gradient(45deg, transparent 46%, #444 46% 58%, transparent 58%) 3px 7px / 5px 5px no-repeat,
    linear-gradient(-45deg, transparent 46%, #444 46% 58%, transparent 58%) 7px 7px / 5px 5px no-repeat,
    #e1e1e1;
  pointer-events: none;
}

.combo-line {
  width: 82px;
  margin: 0 8px 0 9px;
}

.line-sample {
  position: absolute;
  top: 10px;
  left: 2px;
  right: 18px;
  border-top: 1px solid #000;
}

.spin {
  width: 70px;
  margin-right: 7px;
}

.spin input {
  flex: 1;
  min-width: 0;
  padding-left: 3px;
}

.spin-buttons {
  display: flex;
  flex-direction: column;
  width: 15px;
  margin: 1px;
  background-color: #f0f0f0;
  border: 1px solid #c4c4c4;
}

.spin-buttons button {
  display: flex;
  flex: 1;
  align-items: center;
  justify-content: center;
}

.spin-buttons button::before {
  content: "";
  border: 3px solid transparent;
  border-bottom-color: #000;
  border-top: none;
}

.spin-buttons button + button {
  border-top: 1px solid #c4c4c4;
}

.spin-buttons button + button::before {
  border-top: 3px solid #000;
  border-bottom: none;
}

.combo-color {
  width: 92px;
  margin-right: 7px;
}

.combo-color select {
  padding-left: 23px;
}

.combo-fill {
  width: 76px;
  margin-left: 9px;
}

.combo-blue {
  width: 114px;
  margin-right: 11px;
}

.swatch {
  position: absolute;
  top: 4px;
  left: 3px;
  width: 15px;
  height: 13px;
  border: 1px solid #000;
}

.swatch.gray {
  background-color: #808080;
}

.swatch.blue {
  background-color: #cfe7f5;
}

/* workspace */
.workspace {
  display: flex;
  flex: 1;
  min-height: 0;
  border-top: 2px solid #a0a0a0;
  background-color: #f0f0f0;
}

.panel-head {
  display: flex;
  align-items: center;
  justify-content: space-between;
  height: 23px;
}

.panel-head h2 {
  font-size: 12px;
}

.slides-panel {
  display: flex;
  flex-direction: column;
  width: 168px;
  border-left: 1px solid #a0a0a0;
  border-right: 1px solid #a0a0a0;
  border-bottom: 1px solid #a0a0a0;
}

.slides-panel .panel-head {
  padding: 0 1px 0 4px;
}

.slides-list {
  flex: 1;
  margin-left: 3px;
  padding: 8px;
  background-color: #fff;
  border-top: 1px solid #8c8c8c;
  border-left: 1px solid #8c8c8c;
}

.slide-item {
  display: flex;
  justify-content: space-between;
  width: 143px;
  height: 94px;
  padding: 3px;
  background-color: #a3bfe3;
  border: 1px solid #5d7ba3;
}

.slide-number {
  padding-left: 11px;
  font: bold 12px/14px "Liberation Sans", sans-serif;
  color: #4a5a70;
}

.thumb {
  width: 114px;
  height: 85px;
  background-color: #fff;
  box-shadow: 0 0 2px 1px rgba(60, 80, 110, 0.6);
  font-family: "Liberation Sans", sans-serif;
  text-anchor: middle;
}

.splitter {
  display: flex;
  align-items: center;
  justify-content: center;
  width: 7px;
}

.splitter span {
  width: 2px;
  height: 32px;
  background: repeating-linear-gradient(#777 0 2px, transparent 2px 5px);
}

.right-splitter {
  border-left: 1px solid #fff;
}

.editor {
  display: flex;
  flex: 1;
  flex-direction: column;
  min-width: 0;
  border-left: 1px solid #696969;
  border-top: 1px solid #696969;
}

.tabs {
  display: flex;
  align-items: flex-end;
  height: 27px;
  padding: 0 0 1px 6px;
}

.tab {
  height: 22px;
  padding: 0 2px 2px;
  border-top: 1px solid #e0e0e0;
  border-right: 1px solid #dcdcdc;
}

.tab:last-child {
  padding: 0 6px 2px 4px;
}

.tab.current {
  height: 25px;
  padding-bottom: 3px;
  font-weight: bold;
  background-color: #fff;
}

.view {
  display: grid;
  flex: 1;
  grid-template-columns: 1fr 17px;
  grid-template-rows: 1fr 18px;
  min-height: 0;
}

.canvas {
  display: flex;
  justify-content: center;
  align-items: flex-start;
  min-width: 0;
  overflow: hidden;
  padding-right: 9px;
  background-color: #ababab;
}

.slide {
  position: relative;
  flex: none;
  width: 656px;
  height: 490px;
  margin-top: -15px;
  background-color: #fff;
  box-shadow: -1px 0 3px #666;
}

.slide h2 {
  padding-top: 20px;
  padding-right: 10px;
  font: 36px/40px "Liberation Sans", Arial, sans-serif;
  text-align: center;
}

.shape {
  position: absolute;
  display: flex;
  flex-direction: column;
  gap: 16px;
  padding-top: 2px;
  background-color: #cfe7f5;
  border: 1px solid #808080;
  font: 15px/17px "Liberation Sans", Arial, sans-serif;
  text-align: center;
}

.shape p {
  position: relative;
}

.static-box {
  top: 75px;
  left: 201px;
  width: 230px;
  height: 134px;
  padding-top: 7px;
}

.player {
  top: 250px;
  width: 189px;
  height: 208px;
  padding-right: 1px;
  border-radius: 32px;
}

.p1 {
  left: 27px;
}

.p2 {
  left: 238px;
}

.p3 {
  left: 449px;
}

.highlight {
  position: absolute;
  top: 11px;
  left: 65px;
  width: 48px;
  height: 48px;
  border-radius: 50%;
  background-color: #cfe000;
}

.cursor {
  position: absolute;
  top: 34px;
  left: 90px;
  width: 14px;
  height: 21px;
}

.scroll {
  display: flex;
  background-color: #f0f0f0;
}

.scroll button {
  display: flex;
  flex: none;
  align-items: center;
  justify-content: center;
  width: 17px;
  height: 17px;
}

.scroll svg {
  width: 10px;
  height: 10px;
}

.vertical {
  flex-direction: column;
  align-items: center;
}

.thumb-bar {
  background-color: #cdcdcd;
}

.vertical .thumb-bar {
  width: 15px;
}

.horizontal .thumb-bar {
  height: 15px;
  margin-top: 1px;
}

.down svg {
  transform: rotate(180deg);
}

.left svg {
  transform: rotate(-90deg);
}

.right svg {
  transform: rotate(90deg);
}

.view .vertical .before, .view .vertical .after {
  flex: 114;
}

.view .vertical .thumb-bar {
  flex: 208;
}

.view .horizontal .before, .view .horizontal .after {
  flex: 239;
}

.view .horizontal .thumb-bar {
  flex: 497;
}

/* tasks */
.tasks-panel {
  display: flex;
  flex-direction: column;
  width: 73px;
  margin-right: 1px;
  padding: 0 2px 2px 3px;
  border: solid #a0a0a0;
  border-width: 0 1px 1px;
}

.tasks-panel .panel-head {
  height: 27px;
}

.tasks-panel h2 {
  position: relative;
  flex: 1;
  padding-left: 1px;
}

.view-label {
  position: absolute;
  left: 6px;
}

.sections {
  display: flex;
  flex: 1;
  flex-direction: column;
  min-height: 0;
  border: solid #a0a0a0;
  border-width: 0 1px;
}

.section {
  display: flex;
  align-items: center;
  flex: none;
  gap: 4px;
  height: 23px;
  padding-left: 4px;
  overflow: hidden;
  white-space: nowrap;
  border-bottom: 1px solid #a0a0a0;
}

.section svg {
  width: 8px;
  height: 10px;
}

.section:first-child {
  border-top: 1px solid #a0a0a0;
}

.section.open {
  gap: 2px;
  font-weight: bold;
}

.section.open svg {
  width: 10px;
  height: 8px;
}

.layouts {
  display: grid;
  flex: 1;
  grid-template-columns: 1fr 16px;
  grid-template-rows: 1fr 17px;
  min-height: 0;
}

.layout-list {
  min-width: 0;
  overflow: hidden;
  padding: 2px 0 0 2px;
  background-color: #fff;
}

.layout {
  width: 45px;
  height: 62px;
}

.layouts .vertical .thumb-bar {
  flex: 165;
}

.layouts .vertical .after {
  flex: 170;
}

.layouts .horizontal {
  grid-column: span 2;
}

.layouts .horizontal .thumb-bar {
  flex: 1;
}

/* drawing toolbar */
.drawing {
  height: 32px;
  border-bottom: 2px solid #b4b4b4;
}

.drawing .toolbar {
  border-bottom: none;
}

/* status bar */
.statusbar {
  display: flex;
  align-items: center;
  height: 21px;
  padding-left: 491px;
  background-color: #f0f0f0;
}

.cell {
  display: flex;
  align-items: center;
  height: 16px;
  padding-left: 5px;
  border-left: 1px solid #a0a0a0;
}

.position, .size {
  flex: none;
  gap: 4px;
  padding-left: 7px;
  white-space: nowrap;
}

.position {
  width: 107px;
}

.size {
  width: 114px;
  border-left: none;
}

.modified {
  width: 16px;
  padding-left: 4px;
}

.signature {
  width: 29px;
}

.slide-no {
  width: 64px;
  white-space: nowrap;
}

.template {
  flex: 1;
}

.zoom {
  gap: 5px;
  width: 143px;
}

.zoom svg {
  width: 12px;
  height: 12px;
}

.zoom input {
  appearance: none;
  width: 95px;
  height: 12px;
  background:
    linear-gradient(#808080, #808080) 0 5px / 100% 1px no-repeat,
    linear-gradient(#808080, #808080) 0 6px / 1px 2px no-repeat,
    linear-gradient(#808080, #808080) 47px 0 / 1px 100% no-repeat;
}

.zoom input::-webkit-slider-thumb {
  appearance: none;
  width: 8px;
  height: 8px;
  border: 1px solid #2c4660;
  border-radius: 50%;
  background-color: #5f86a8;
}

.percent {
  width: 43px;
  padding-left: 7px;
}

/* windows taskbar */
.taskbar {
  display: flex;
  height: 40px;
  background-color: #000;
  color: #fff;
}

.task {
  position: relative;
  display: flex;
  flex: none;
  align-items: center;
  justify-content: center;
  width: 48px;
  margin-right: 1px;
}

.task:first-child {
  margin-right: 0;
}

.task svg {
  width: 24px;
  height: 24px;
}

.task-grip {
  width: 5px;
  height: 16px;
  margin: 12px 12px 0 4px;
  border: solid #333;
  border-width: 0 1px;
}

.running::after {
  content: "";
  position: absolute;
  bottom: 0;
  left: 4px;
  right: 4px;
  height: 2px;
  background-color: #8ab4ea;
}

.focused {
  background-color: #333;
}

.focused::after {
  left: 0;
  right: 0;
}

.ps {
  width: 22px;
  height: 20px;
  background: linear-gradient(#2f8ede, #1565b5);
  color: #0a1d38;
  font-weight: bold;
  line-height: 20px;
}

.tray {
  display: flex;
  align-items: center;
  margin-left: auto;
}

.tray button {
  display: flex;
  justify-content: center;
  width: 24px;
}

.tray svg {
  width: 16px;
  height: 16px;
}

.tray .tray-help {
  width: 32px;
}

.tray .tray-help svg {
  width: 32px;
  height: 32px;
}

.lang {
  width: 32px;
  padding-left: 6px;
}

.clock {
  width: 84px;
  text-align: center;
}

.show-desktop {
  width: 4px;
  height: 40px;
  border-left: 1px solid #555;
}
```
